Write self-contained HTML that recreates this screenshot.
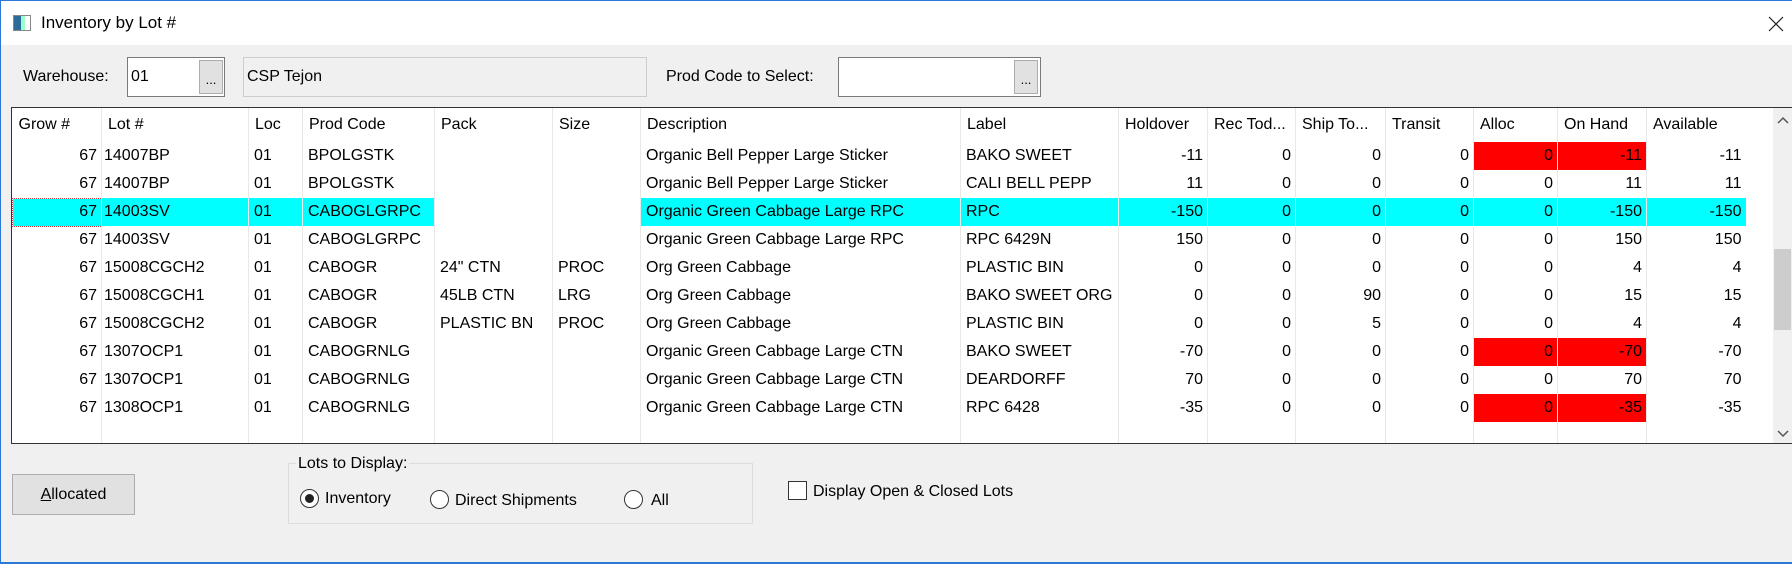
<!DOCTYPE html>
<html><head><meta charset="utf-8"><style>
*{box-sizing:border-box;margin:0;padding:0}
body{width:1792px;height:564px;background:#f0f0f0;font-family:"Liberation Sans",sans-serif;font-size:16px;color:#000;position:relative;overflow:hidden}
.abs{position:absolute}
#win{position:absolute;left:0;top:0;width:1792px;height:564px;border:1px solid #2b79d7;border-right:none}
#title{position:absolute;left:1px;top:1px;width:1791px;height:44px;background:#fff}
.tb{position:absolute;background:#fff;border:1px solid #7a7a7a}
.btn{position:absolute;background:#e1e1e1;border:1px solid #adadad;text-align:center;font-size:13px}
#grid{position:absolute;left:11px;top:107px;width:1781px;height:337px;background:#fff;border:1px solid #333;border-right:none;overflow:hidden}
table{border-collapse:collapse;table-layout:fixed;position:absolute;left:0;top:0}
td{height:28px;white-space:nowrap;overflow:hidden;padding:0 5px;border-left:1px solid #e8e8e8}
td.r{text-align:right;padding-right:4px}
tr.h td{height:34px;padding-left:6px;text-align:left}
.c{background:#00ffff}.red{background:#ff0000}
.rad{position:absolute;width:19px;height:19px;border:1px solid #333;border-radius:50%;background:#fff}
</style></head><body>
<div id="win"></div>
<div id="title">
 <div class="abs" style="left:12px;top:14px;width:18px;height:16px;border:1px solid #888;background:linear-gradient(90deg,#2a6b9a 0,#2a6b9a 45%,#9fc 45%,#9fc 70%,#fff 70%)"></div>
 <div class="abs" style="left:40px;top:12px;font-size:17px">Inventory by Lot #</div>
 <svg class="abs" style="left:1767px;top:15px" width="16" height="16"><path d="M1 1L15 15M15 1L1 15" stroke="#222" stroke-width="1.2"/></svg>
</div>
<div class="abs" style="left:23px;top:68px">Warehouse:</div>
<div class="tb" style="left:127px;top:57px;width:98px;height:40px"><span class="abs" style="left:3px;top:10px">01</span></div>
<div class="btn" style="left:199px;top:60px;width:24px;height:34px;line-height:38px">...</div>
<div class="abs" style="left:243px;top:57px;width:404px;height:40px;border:1px solid #ccc;background:#f0f0f0"><span class="abs" style="left:3px;top:10px">CSP Tejon</span></div>
<div class="abs" style="left:666px;top:68px">Prod Code to Select:</div>
<div class="tb" style="left:838px;top:57px;width:203px;height:40px"></div>
<div class="btn" style="left:1014px;top:60px;width:24px;height:34px;line-height:38px">...</div>

<div id="grid">
<table>
<colgroup><col style="width:89px"><col style="width:147px"><col style="width:54px"><col style="width:132px"><col style="width:118px"><col style="width:88px"><col style="width:320px"><col style="width:158px"><col style="width:89px"><col style="width:88px"><col style="width:90px"><col style="width:88px"><col style="width:84px"><col style="width:89px"><col style="width:99px"></colgroup>
<tr class="h"><td style="border-left:none">Grow #</td><td>Lot #</td><td>Loc</td><td>Prod Code</td><td>Pack</td><td>Size</td><td>Description</td><td>Label</td><td>Holdover</td><td>Rec Tod...</td><td>Ship To...</td><td>Transit</td><td>Alloc</td><td>On Hand</td><td>Available</td></tr>
<tr><td class="r" style="border-left:none">67</td><td style="padding-left:2px">14007BP</td><td>01</td><td>BPOLGSTK</td><td></td><td></td><td>Organic Bell Pepper Large Sticker</td><td>BAKO SWEET</td><td class="r">-11</td><td class="r">0</td><td class="r">0</td><td class="r">0</td><td class="r red">0</td><td class="r red">-11</td><td class="r">-11</td></tr>
<tr><td class="r" style="border-left:none">67</td><td style="padding-left:2px">14007BP</td><td>01</td><td>BPOLGSTK</td><td></td><td></td><td>Organic Bell Pepper Large Sticker</td><td>CALI BELL PEPP</td><td class="r">11</td><td class="r">0</td><td class="r">0</td><td class="r">0</td><td class="r">0</td><td class="r">11</td><td class="r">11</td></tr>
<tr><td class="r c" style="border:1px dotted #c33">67</td><td class="c" style="padding-left:2px">14003SV</td><td class="c">01</td><td class="c">CABOGLGRPC</td><td></td><td></td><td class="c">Organic Green Cabbage Large RPC</td><td class="c">RPC</td><td class="r c">-150</td><td class="r c">0</td><td class="r c">0</td><td class="r c">0</td><td class="r c">0</td><td class="r c">-150</td><td class="r c">-150</td></tr>
<tr><td class="r" style="border-left:none">67</td><td style="padding-left:2px">14003SV</td><td>01</td><td>CABOGLGRPC</td><td></td><td></td><td>Organic Green Cabbage Large RPC</td><td>RPC 6429N</td><td class="r">150</td><td class="r">0</td><td class="r">0</td><td class="r">0</td><td class="r">0</td><td class="r">150</td><td class="r">150</td></tr>
<tr><td class="r" style="border-left:none">67</td><td style="padding-left:2px">15008CGCH2</td><td>01</td><td>CABOGR</td><td>24" CTN</td><td>PROC</td><td>Org Green Cabbage</td><td>PLASTIC BIN</td><td class="r">0</td><td class="r">0</td><td class="r">0</td><td class="r">0</td><td class="r">0</td><td class="r">4</td><td class="r">4</td></tr>
<tr><td class="r" style="border-left:none">67</td><td style="padding-left:2px">15008CGCH1</td><td>01</td><td>CABOGR</td><td>45LB CTN</td><td>LRG</td><td>Org Green Cabbage</td><td>BAKO SWEET ORG</td><td class="r">0</td><td class="r">0</td><td class="r">90</td><td class="r">0</td><td class="r">0</td><td class="r">15</td><td class="r">15</td></tr>
<tr><td class="r" style="border-left:none">67</td><td style="padding-left:2px">15008CGCH2</td><td>01</td><td>CABOGR</td><td>PLASTIC BN</td><td>PROC</td><td>Org Green Cabbage</td><td>PLASTIC BIN</td><td class="r">0</td><td class="r">0</td><td class="r">5</td><td class="r">0</td><td class="r">0</td><td class="r">4</td><td class="r">4</td></tr>
<tr><td class="r" style="border-left:none">67</td><td style="padding-left:2px">1307OCP1</td><td>01</td><td>CABOGRNLG</td><td></td><td></td><td>Organic Green Cabbage Large CTN</td><td>BAKO SWEET</td><td class="r">-70</td><td class="r">0</td><td class="r">0</td><td class="r">0</td><td class="r red">0</td><td class="r red">-70</td><td class="r">-70</td></tr>
<tr><td class="r" style="border-left:none">67</td><td style="padding-left:2px">1307OCP1</td><td>01</td><td>CABOGRNLG</td><td></td><td></td><td>Organic Green Cabbage Large CTN</td><td>DEARDORFF</td><td class="r">70</td><td class="r">0</td><td class="r">0</td><td class="r">0</td><td class="r">0</td><td class="r">70</td><td class="r">70</td></tr>
<tr><td class="r" style="border-left:none">67</td><td style="padding-left:2px">1308OCP1</td><td>01</td><td>CABOGRNLG</td><td></td><td></td><td>Organic Green Cabbage Large CTN</td><td>RPC 6428</td><td class="r">-35</td><td class="r">0</td><td class="r">0</td><td class="r">0</td><td class="r red">0</td><td class="r red">-35</td><td class="r">-35</td></tr>
<tr><td style="height:30px;border-left:none"></td><td></td><td></td><td></td><td></td><td></td><td></td><td></td><td></td><td></td><td></td><td></td><td></td><td></td><td></td></tr>
</table>
<div class="abs" style="left:1761px;top:0;width:20px;height:337px;background:#f0f0f0"></div>
<svg class="abs" style="left:1765px;top:8px" width="12" height="8"><path d="M1 7L6 2L11 7" stroke="#555" fill="none" stroke-width="1.5"/></svg>
<div class="abs" style="left:1762px;top:141px;width:17px;height:81px;background:#cdcdcd"></div>
<svg class="abs" style="left:1765px;top:322px" width="12" height="8"><path d="M1 1L6 6L11 1" stroke="#555" fill="none" stroke-width="1.5"/></svg>
</div>

<div class="btn" style="left:12px;top:474px;width:123px;height:41px;line-height:40px;font-size:16px"><u>A</u>llocated</div>
<div class="abs" style="left:288px;top:463px;width:465px;height:61px;border:1px solid #dcdcdc"></div>
<div class="abs" style="left:296px;top:455px;background:#f0f0f0;padding:0 2px">Lots to Display:</div>
<div class="rad" style="left:300px;top:489px"><div class="abs" style="left:4px;top:4px;width:9px;height:9px;border-radius:50%;background:#222"></div></div>
<div class="abs" style="left:325px;top:490px">Inventory</div>
<div class="rad" style="left:430px;top:490px"></div>
<div class="abs" style="left:455px;top:492px">Direct Shipments</div>
<div class="rad" style="left:624px;top:490px"></div>
<div class="abs" style="left:651px;top:492px">All</div>
<div class="abs" style="left:788px;top:481px;width:19px;height:19px;border:1px solid #333;background:#fff"></div>
<div class="abs" style="left:813px;top:483px">Display Open &amp; Closed Lots</div>
<div class="abs" style="left:0;top:562px;width:1792px;height:2px;background:#2b79d7"></div>
</body></html>
